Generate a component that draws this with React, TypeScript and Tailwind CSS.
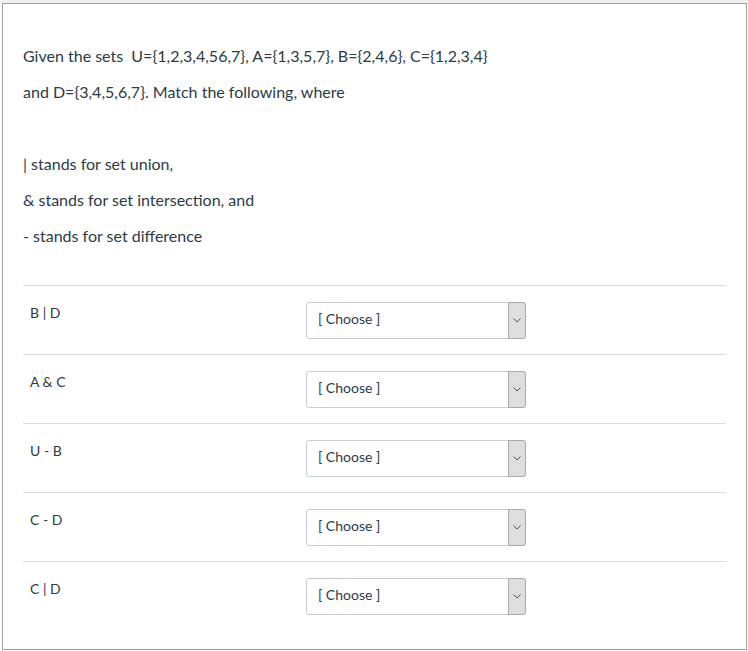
import React from "react";

const rows = ["B | D", "A & C", "U - B", "C - D", "C | D"];

function ChooseSelect() {
  return (
    <div className="flex h-[37px] w-[220px] items-stretch rounded-[3px] border border-[#c7cdd1] bg-white">
      <div className="flex flex-1 items-center pb-[5px] pl-[11px] text-[14px] text-[#2d3b45]">[ Choose ]</div>
      <div className="-my-px -mr-px flex w-[18px] items-center justify-center rounded-r-[3px] border border-[#a9a9a9] bg-[#dedede]">
        <svg width="8" height="5" viewBox="0 0 8 5" fill="none">
          <path d="M0.5 0.5 L4 4 L7.5 0.5" stroke="#555" strokeWidth="1" />
        </svg>
      </div>
    </div>
  );
}

export default function App() {
  return (
    <div className="h-[651px] w-[748px] bg-white font-['Lato',sans-serif] text-[#2d3b45]">
      <div className="h-[3px] bg-[#f0f0f0]" />
      <div className="ml-[2px] h-[647px] w-[745px] border border-[#a0a0a0] px-[20px] pt-[40px]">
        <div className="text-[16px] leading-[24px]">
          <p className="mb-[12px]">Given the sets&nbsp; U={"{1,2,3,4,56,7}"}, A={"{1,3,5,7}"}, B={"{2,4,6}"}, C={"{1,2,3,4}"}</p>
          <p className="mb-[12px]">and D={"{3,4,5,6,7}"}. Match the following, where</p>
          <p className="mb-[12px]">&nbsp;</p>
          <p className="mb-[12px]">| stands for set union,</p>
          <p className="mb-[12px]">&amp; stands for set intersection, and</p>
          <p>- stands for set difference</p>
        </div>
        <div className="mt-[37px]">
          {rows.map((r, i) => (
            <div key={r + i} className="flex border-t border-[#dcdcdc] pt-[16px] pb-[15px] pl-[7px]">
              <div className="-mt-[1px] w-[276px] text-[14px] leading-[24px]">{r}</div>
              <ChooseSelect />
            </div>
          ))}
        </div>
      </div>
    </div>
  );
}
